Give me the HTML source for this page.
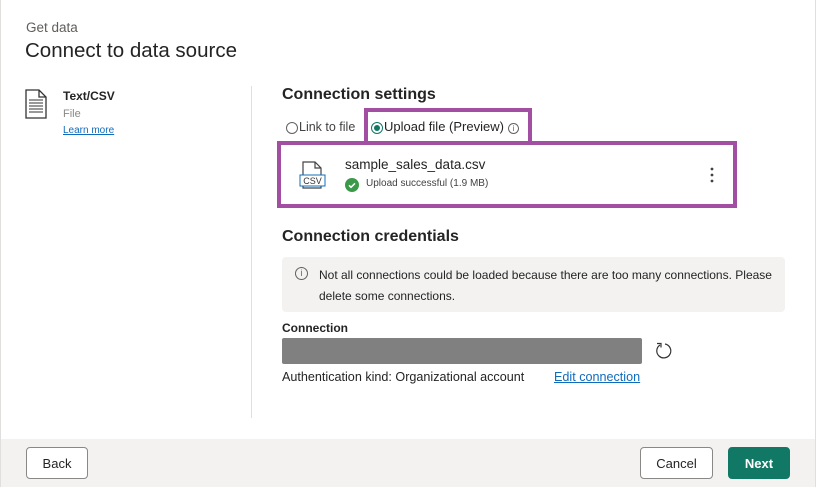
<!DOCTYPE html>
<html><head><style>
*{margin:0;padding:0;box-sizing:border-box}
body{width:816px;height:487px;background:#fff;font-family:"Segoe UI","Liberation Sans",sans-serif;color:#242424;position:relative;overflow:hidden}
.a{position:absolute}
.btn{position:absolute;top:447px;height:32px;border:1px solid #8a8886;border-radius:4px;background:#fff;font-size:13px;display:flex;align-items:center;justify-content:center}
</style></head><body>
<div class="a" style="left:0;top:0;width:816px;height:487px;border:1px solid #e1dfdd;border-top:none"></div>
<div class="a" style="left:26px;top:20px;font-size:13.5px;color:#605e5c">Get data</div>
<div class="a" style="left:25px;top:39px;font-size:20.5px;color:#242424">Connect to data source</div>
<svg class="a" style="left:25px;top:89px" width="22" height="30" viewBox="0 0 22 30"><path d="M1 1h13l7 7v21H1z M14 1v7h7" fill="none" stroke="#333" stroke-width="1.3"/><path d="M4 11h14M4 14h14M4 17h14M4 20h14M4 23h14" stroke="#333" stroke-width="1"/></svg>
<div class="a" style="left:63px;top:89px;font-size:12px;font-weight:600">Text/CSV</div>
<div class="a" style="left:63px;top:108px;font-size:11px;color:#8a8886">File</div>
<div class="a" style="left:63px;top:125px;font-size:10px;color:#0f6cbd;text-decoration:underline">Learn more</div>
<div class="a" style="left:251px;top:86px;width:1px;height:332px;background:#e1dfdd"></div>
<div class="a" style="left:282px;top:86px;font-size:16px;font-weight:600;color:#242424">Connection settings</div>
<div class="a" style="left:286px;top:122px;width:12px;height:12px;border:1px solid #616161;border-radius:50%"></div>
<div class="a" style="left:299px;top:120px;font-size:12.5px;color:#424242">Link to file</div>
<div class="a" style="left:364px;top:108px;width:168px;height:33px;border:4px solid #a14ea3;border-bottom:none"></div>
<div class="a" style="left:371px;top:122px;width:12px;height:12px;border:1px solid #117865;border-radius:50%"><div style="margin:2px;width:6px;height:6px;border-radius:50%;background:#117865"></div></div>
<div class="a" style="left:384px;top:119px;font-size:13px;color:#242424">Upload file (Preview)</div>
<div class="a" style="left:508px;top:123px;width:11px;height:11px;border:1px solid #616161;border-radius:50%;font-size:8px;text-align:center;line-height:9px;color:#616161">i</div>
<div class="a" style="left:277px;top:141px;width:460px;height:67px;border:4px solid #a14ea3"></div>
<svg class="a" style="left:298px;top:160px" width="30" height="30" viewBox="0 0 30 30"><path d="M5 15V2h12l6 6v7 M17 2v6h6 M5 26v2h18v-2" fill="none" stroke="#444" stroke-width="1.2"/><rect x="2" y="15" width="25" height="11" fill="#fff" stroke="#0f6cbd" stroke-width="1"/><text x="14.5" y="24" font-size="9" text-anchor="middle" fill="#333" font-family="Liberation Sans">CSV</text></svg>
<div class="a" style="left:345px;top:157px;font-size:13.5px">sample_sales_data.csv</div>
<div class="a" style="left:345px;top:178px;width:14px;height:14px;border-radius:50%;background:#3a9a4a"><svg width="14" height="14"><path d="M4 7.3l2 2 4-4" fill="none" stroke="#fff" stroke-width="1.5"/></svg></div>
<div class="a" style="left:366px;top:178px;font-size:10px;color:#424242">Upload successful (1.9 MB)</div>
<svg class="a" style="left:708px;top:166px" width="8" height="18"><circle cx="4" cy="3" r="1.4" fill="#424242"/><circle cx="4" cy="9" r="1.4" fill="#424242"/><circle cx="4" cy="15" r="1.4" fill="#424242"/></svg>
<div class="a" style="left:282px;top:228px;font-size:16px;font-weight:600">Connection credentials</div>
<div class="a" style="left:282px;top:257px;width:503px;height:55px;background:#f3f2f1;border-radius:4px"></div>
<div class="a" style="left:295px;top:267px;width:13px;height:13px;border:1px solid #616161;border-radius:50%;font-size:9px;text-align:center;line-height:11px;color:#616161">i</div>
<div class="a" style="left:319px;top:265px;width:460px;font-size:12px;line-height:21px;color:#242424">Not all connections could be loaded because there are too many connections. Please delete some connections.</div>
<div class="a" style="left:282px;top:321px;font-size:12px;font-weight:600">Connection</div>
<div class="a" style="left:282px;top:338px;width:360px;height:26px;background:#808080;border-radius:2px"></div>
<svg class="a" style="left:654px;top:340px" width="22" height="22" viewBox="0 0 22 22"><path d="M6 5A7 7 0 1 0 11 4" fill="none" stroke="#333" stroke-width="1.2"/><path d="M3 3.5h4v4" fill="none" stroke="#333" stroke-width="1.2"/></svg>
<div class="a" style="left:282px;top:370px;font-size:12.6px">Authentication kind: Organizational account</div>
<div class="a" style="left:554px;top:370px;font-size:12.6px;color:#0f6cbd;text-decoration:underline">Edit connection</div>
<div class="a" style="left:1px;top:439px;width:814px;height:48px;background:#f3f2f1"></div>
<div class="btn" style="left:26px;width:62px">Back</div>
<div class="btn" style="left:640px;width:73px">Cancel</div>
<div class="btn" style="left:728px;width:62px;background:#117865;border-color:#117865;color:#fff;font-weight:600">Next</div>
</body></html>
